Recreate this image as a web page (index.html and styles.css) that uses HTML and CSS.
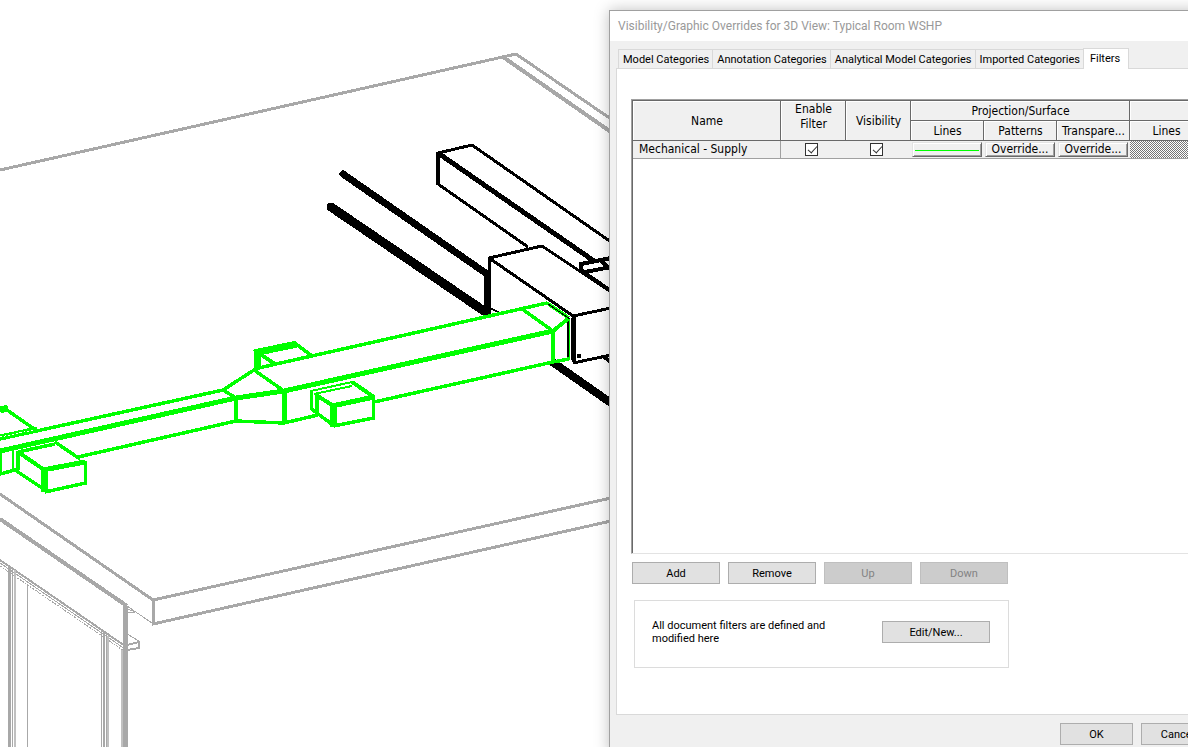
FILE: index.html
```html
<!DOCTYPE html>
<html lang="en">
<head>
    <meta charset="UTF-8">
    <meta name="viewport" content="width=device-width, initial-scale=1.0">
    <title>Visibility/Graphic Overrides</title>
    <link rel="stylesheet" href="styles.css">
</head>
<body>
    <svg class="model-view" viewBox="0 0 1188 747" preserveAspectRatio="xMinYMin slice" aria-hidden="true">
        <!-- Slab and walls -->
        <g class="wall">
            <path d="M0 170L516 54L611 119"/>
            <path class="w4" d="M503 57L611 132"/>
            <path d="M0 494L153 600L611 498M153 599V624L611 521"/>
            <path class="w4" d="M0 519L127 606"/>
            <path class="w1" d="M127 606L152 623M128 609L135 612L128 613"/>
            <path class="w1" d="M127 634L139 641"/>
            <path class="w2" d="M127 645L139 642V648L127 650"/>
            <path class="w2" d="M0 560L125 646"/>
            <path class="w1" d="M0 563L125 649"/>
            <path class="w1 hatch" d="M0 566L124 651"/>
            <path d="M9.500 566V747M124.500 606V747"/>
            <path class="w1" d="M12.500 568V747M27.500 584V747M101.500 631V747M106.500 634V747"/>
            <path class="w2" d="M104 632V747M127 606V747"/>
            <path class="w2 light" d="M15 570V747M108 636V747M122 650V747"/>
        </g>

        <!-- Unit, return duct and pipes -->
        <g class="unit">
            <path class="w6 round" d="M343 174L487 274"/>
            <path class="w9 round" d="M331 207L487 313"/>
            <path class="w8" d="M551 361L611 403"/>
            <path class="w4" d="M603 356L611 362"/>
            <path d="M438 153L472 145L611 242M438 184L528 247"/>
            <path class="w4" d="M438 152V185"/>
            <path class="w5" d="M438 153L594 261"/>
            <path d="M489 310V258L542 246L611 292M489 258L573 316L611 308"/>
            <path class="w4" d="M583 272L611 291"/>
            <path class="w6" d="M487 273V313"/>
            <path class="w4" d="M573.500 316V362"/>
            <path d="M573 363L611 355"/>
            <path class="w2" d="M490 308L500 313M568 316V361"/>
            <path class="w4" d="M611 258L581 264V270L585 272L611 267M601 261L608 267"/>
            <circle class="dot" cx="579" cy="356" r="2.500"/>
        </g>

        <!-- Supply duct -->
        <g class="supply">
            <path d="M0 439L223 390L254 370L284 391M223 390L236 398"/>
            <path class="w5" d="M0 451L236 398L284 391"/>
            <path class="w5" d="M284 391L553 331"/>
            <path class="w4" d="M236 398V421"/>
            <path class="w5" d="M284.500 391V423"/>
            <path d="M78 457L236 421L284 423L318 415M374 402L553 362L569 359"/>
            <path d="M254 369L547 303M522 309L553 331V362"/>
            <path class="w4" d="M553 331L569 318"/>
            <path d="M547 303L569 318"/>
            <path class="w1" d="M569.500 318V360"/>

            <path class="w6" d="M254 353L297 344"/>
            <path class="w6" d="M257 351V369"/>
            <path class="w4" d="M260 354L275 364"/>
            <path d="M296 344L312 356"/>

            <path class="w2" d="M311 391L352 382M314 394L352 386"/>
            <path d="M311.500 390V409L333 425"/>
            <path class="w4" d="M316.500 394V414M316 395L332 405M352 382L374 397"/>
            <path class="w5" d="M332 406L374 397"/>
            <path class="w6" d="M333 403V427"/>
            <path d="M373.500 396V418L334 426"/>

            <path class="w2" d="M1 451V474M13 449V470M13 449L55 440"/>
            <path d="M0 474L15 470L42 488M18 452L55 444M55 442L80 459"/>
            <path class="w4" d="M18 451V470M18 452L43 469"/>
            <path class="w5" d="M43 470L85 462"/>
            <path class="w6" d="M44 467V492"/>
            <path d="M85.500 461V483L45 492"/>

            <path class="w6" d="M0 410L8 408"/>
            <path d="M7 410L37 431"/>
            <path class="w5" d="M0 437L37 429"/>
            <path class="gap" d="M0 437L34 430"/>
        </g>
        <path class="edge" d="M548 304L570 319M571.500 318V360"/>
    </svg>

    <main class="dialog">
        <h1 class="title-bar">Visibility/Graphic Overrides for 3D View: Typical Room WSHP</h1>

        <div class="tabs" role="tablist">
            <button type="button" class="tab" role="tab">Model Categories</button>
            <button type="button" class="tab" role="tab">Annotation Categories</button>
            <button type="button" class="tab" role="tab">Analytical Model Categories</button>
            <button type="button" class="tab" role="tab">Imported Categories</button>
            <button type="button" class="tab active" role="tab" aria-selected="true">Filters</button>
        </div>

        <section class="panel">
            <div class="filter-list">
                <table>
                    <colgroup>
                        <col class="col-name">
                        <col class="col-check">
                        <col class="col-check">
                        <col class="col-override">
                        <col class="col-override">
                        <col class="col-override">
                        <col class="col-override">
                    </colgroup>
                    <thead>
                        <tr>
                            <th rowspan="2">Name</th>
                            <th rowspan="2" id="enable" class="two-line">Enable<br>Filter</th>
                            <th rowspan="2" id="visibility">Visibility</th>
                            <th colspan="3">Projection/Surface</th>
                            <th></th>
                        </tr>
                        <tr>
                            <th>Lines</th>
                            <th>Patterns</th>
                            <th>Transpare...</th>
                            <th>Lines</th>
                        </tr>
                    </thead>
                    <tbody>
                        <tr>
                            <td class="name">Mechanical - Supply</td>
                            <td class="check"><input type="checkbox" aria-labelledby="enable" checked></td>
                            <td class="check"><input type="checkbox" aria-labelledby="visibility" checked></td>
                            <td><button type="button" class="override" aria-label="Lines"><span class="line-sample"></span></button></td>
                            <td><button type="button" class="override">Override...</button></td>
                            <td><button type="button" class="override">Override...</button></td>
                            <td class="unavailable"></td>
                        </tr>
                    </tbody>
                </table>
            </div>

            <div class="actions">
                <button type="button" class="btn">Add</button>
                <button type="button" class="btn">Remove</button>
                <button type="button" class="btn" disabled>Up</button>
                <button type="button" class="btn" disabled>Down</button>
            </div>

            <div class="group">
                <p>All document filters are defined and modified here</p>
                <button type="button" class="btn btn-wide">Edit/New...</button>
            </div>
        </section>

        <footer class="dialog-footer">
            <button type="button" class="btn">OK</button>
            <button type="button" class="btn">Cancel</button>
        </footer>
    </main>
</body>
</html>
```
FILE: styles.css
```css
* {
    box-sizing: border-box;
}
body {
    margin: 0;
    height: 100vh;
    position: relative;
    overflow: hidden;
    background-color: #ffffff;
    color: #000000;
    font-family: Roboto, "Noto Sans", sans-serif;
    font-size: 11px;
}
button {
    font: inherit;
    color: inherit;
    padding: 0;
}

/* 3D view */
.model-view {
    display: block;
    width: 100%;
    height: 100%;
    fill: none;
    stroke-width: 3;
    shape-rendering: crispEdges;
}
.wall {
    stroke: #a8a8a8;
}
.unit {
    stroke: #000000;
}
.supply {
    stroke: #00ff00;
    stroke-width: 3.5;
}
.w1 { stroke-width: 1; }
.w2 { stroke-width: 2; }
.w4 { stroke-width: 4; }
.w5 { stroke-width: 5; }
.w6 { stroke-width: 7; }
.w8 { stroke-width: 8; }
.w9 { stroke-width: 9; }
.round {
    stroke-linecap: round;
}
.light {
    stroke: #c0c0c0;
}
.hatch {
    stroke-dasharray: 2 1;
}
.gap {
    stroke: #ffffff;
    stroke-width: 1;
    stroke-dasharray: 2 2;
}
.edge {
    stroke: #000000;
    stroke-width: 1;
}
.dot {
    fill: #000000;
    stroke: none;
}

/* Dialog */
.dialog {
    position: absolute;
    top: 10px;
    left: 609px;
    right: -35px;
    bottom: -8px;
    display: flex;
    flex-direction: column;
    border: 1px solid #a0a0a0;
    background-color: #f0f0f0;
    box-shadow: 0 0 14px rgba(0, 0, 0, 0.25);
}
.title-bar {
    margin: 0;
    padding: 0 8px;
    background-color: #ffffff;
    color: #999999;
    font-size: 12px;
    font-weight: normal;
    line-height: 30px;
}
.tabs {
    display: flex;
    align-items: flex-end;
    padding: 7px 8px 0;
}
.tab {
    height: 19px;
    padding: 1px 3px 0 4px;
    border: 1px solid #d9d9d9;
    border-right: 0;
    border-bottom: 0;
    background-color: #f0f0f0;
    white-space: nowrap;
}
.tab.active {
    height: 21px;
    padding: 0 8px 2px 6px;
    border-right: 1px solid #d9d9d9;
    background-color: #ffffff;
    position: relative;
    z-index: 1;
    margin-bottom: -1px;
}
.panel {
    flex: 1;
    margin: 0 8px 0 6px;
    padding: 30px 14px 0;
    border: 1px solid #d9d9d9;
    background-color: #ffffff;
    display: flex;
    flex-direction: column;
}

/* Filter list */
.filter-list {
    height: 455px;
    overflow: hidden;
    border: 1px solid #a0a0a0;
    border-bottom-color: #e3e3e3;
    box-shadow: inset 1px 1px #696969;
    padding: 1px 0 0 1px;
    font-family: "DejaVu Sans Condensed", "Noto Sans", sans-serif;
    font-size: 12px;
    line-height: 15px;
}
table {
    width: 570px;
    table-layout: fixed;
    border-collapse: separate;
    border-spacing: 0;
}
.col-name { width: 148px; }
.col-check { width: 65px; }
.col-override { width: 73px; }
th, td {
    padding: 0;
    background-color: #f0f0f0;
    white-space: nowrap;
}
th {
    height: 20px;
    padding: 2px 0 0 1px;
    border-right: 1px solid #696969;
    border-bottom: 1px solid #696969;
    box-shadow: inset 1px 1px #ffffff;
    font-weight: normal;
}
.two-line {
    padding-top: 0;
    padding-bottom: 8px;
}
td {
    height: 18px;
    border-bottom: 1px solid #a0a0a0;
    text-align: center;
}
.name {
    padding-left: 6px;
    border-right: 1px solid #a0a0a0;
    text-align: left;
}
.check {
    padding-right: 4px;
}
.check input {
    appearance: none;
    display: block;
    width: 13px;
    height: 13px;
    margin: 0 auto;
    border: 1px solid #333333;
    background-color: #ffffff;
    position: relative;
}
.check input:checked::after {
    content: "";
    position: absolute;
    left: 4px;
    top: 0;
    width: 4px;
    height: 8px;
    border: solid #333333;
    border-width: 0 1px 1px 0;
    transform: rotate(42deg);
}
.override {
    display: flex;
    align-items: center;
    justify-content: center;
    width: 70px;
    height: 15px;
    margin-left: 1px;
    border: 1px solid;
    border-color: #e3e3e3 #696969 #696969 #e3e3e3;
    background-color: #f0f0f0;
    box-shadow: inset 1px 1px #ffffff, inset -1px -1px #a0a0a0;
}
.line-sample {
    width: 64px;
    height: 1px;
    margin-top: 2px;
    background-color: #00ff00;
}
.unavailable {
    background: repeating-conic-gradient(#777777 0 25%, #ffffff 0 50%) 0 0 / 2px 2px;
}

/* Buttons */
.btn {
    width: 88px;
    height: 22px;
    border: 1px solid #adadad;
    background-color: #e1e1e1;
}
.btn:disabled {
    border-color: #bfbfbf;
    background-color: #cccccc;
    color: #838383;
}
.btn-wide {
    width: 108px;
}
.actions {
    display: flex;
    gap: 8px;
    margin: 8px 0 16px 1px;
}
.group {
    display: flex;
    justify-content: space-between;
    align-items: flex-start;
    width: 375px;
    height: 68px;
    margin-left: 3px;
    padding: 20px 18px 0 17px;
    border: 1px solid #dcdcdc;
}
.group p {
    width: 190px;
    margin: -2px 0 0;
    line-height: 13px;
}
.dialog-footer {
    display: flex;
    justify-content: flex-end;
    gap: 8px;
    padding: 8px 8px 9px;
}
.dialog-footer .btn {
    width: 73px;
}
```
